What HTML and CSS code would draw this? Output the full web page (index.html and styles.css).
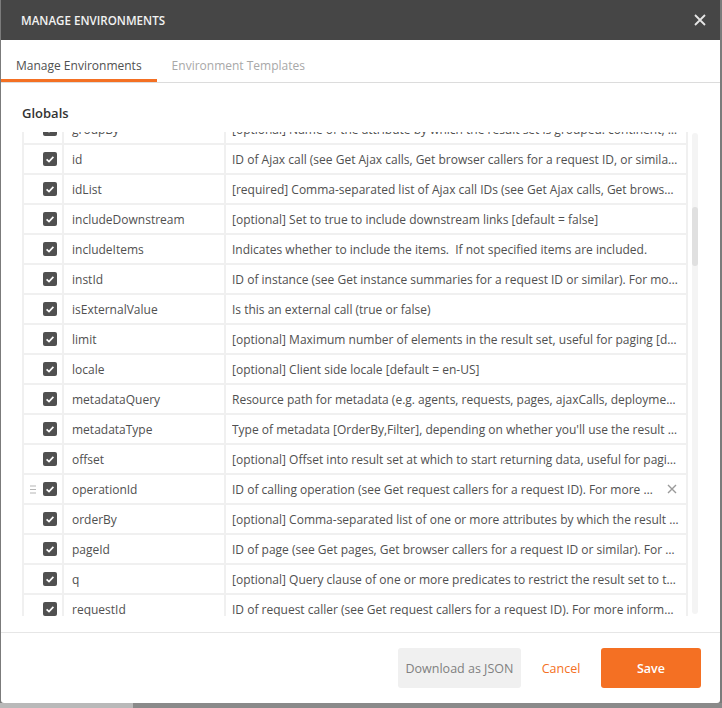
FILE: index.html
```html
<!DOCTYPE html>
<html lang="en">
<head>
	<meta charset="UTF-8">
	<title>Manage Environments</title>
	<link rel="stylesheet" href="styles.css">
</head>
<body>
	<div class="modal">
		<div class="modal-header">
			<span class="modal-title">MANAGE ENVIRONMENTS</span>
			<svg class="close" width="12" height="12" viewBox="0 0 12 12"><path d="M1 1L11 11M11 1L1 11" stroke="#e6e6e6" stroke-width="1.8" fill="none"/></svg>
		</div>
		<div class="tabs">
			<div class="tab active">Manage Environments</div>
			<div class="tab">Environment Templates</div>
		</div>
		<div class="content">
			<div class="section-title">Globals</div>
			<div class="list-wrap">
				<div class="viewport">
					<div class="rows">
						<div class="row"><div class="cell check"><svg width="14" height="14" viewBox="0 0 14 14"><rect width="14" height="14" rx="2" fill="#505050"/><path d="M3.6 7.3L6 9.6L10.4 4.9" stroke="#fff" stroke-width="1.7" fill="none"/></svg></div><div class="cell key">groupBy</div><div class="cell val"><span class="txt">[optional] Name of the attribute by which the result set is grouped: continent, country, region</span></div></div>
						<div class="row"><div class="cell check"><svg width="14" height="14" viewBox="0 0 14 14"><rect width="14" height="14" rx="2" fill="#505050"/><path d="M3.6 7.3L6 9.6L10.4 4.9" stroke="#fff" stroke-width="1.7" fill="none"/></svg></div><div class="cell key">id</div><div class="cell val"><span class="txt">ID of Ajax call (see Get Ajax calls, Get browser callers for a request ID, or similar calls)</span></div></div>
						<div class="row"><div class="cell check"><svg width="14" height="14" viewBox="0 0 14 14"><rect width="14" height="14" rx="2" fill="#505050"/><path d="M3.6 7.3L6 9.6L10.4 4.9" stroke="#fff" stroke-width="1.7" fill="none"/></svg></div><div class="cell key">idList</div><div class="cell val"><span class="txt">[required] Comma-separated list of Ajax call IDs (see Get Ajax calls, Get browser callers)</span></div></div>
						<div class="row"><div class="cell check"><svg width="14" height="14" viewBox="0 0 14 14"><rect width="14" height="14" rx="2" fill="#505050"/><path d="M3.6 7.3L6 9.6L10.4 4.9" stroke="#fff" stroke-width="1.7" fill="none"/></svg></div><div class="cell key">includeDownstream</div><div class="cell val"><span class="txt">[optional] Set to true to include downstream links [default = false]</span></div></div>
						<div class="row"><div class="cell check"><svg width="14" height="14" viewBox="0 0 14 14"><rect width="14" height="14" rx="2" fill="#505050"/><path d="M3.6 7.3L6 9.6L10.4 4.9" stroke="#fff" stroke-width="1.7" fill="none"/></svg></div><div class="cell key">includeItems</div><div class="cell val"><span class="txt">Indicates whether to include the items.&nbsp; If not specified items are included.</span></div></div>
						<div class="row"><div class="cell check"><svg width="14" height="14" viewBox="0 0 14 14"><rect width="14" height="14" rx="2" fill="#505050"/><path d="M3.6 7.3L6 9.6L10.4 4.9" stroke="#fff" stroke-width="1.7" fill="none"/></svg></div><div class="cell key">instId</div><div class="cell val"><span class="txt">ID of instance (see Get instance summaries for a request ID or similar). For more information</span></div></div>
						<div class="row"><div class="cell check"><svg width="14" height="14" viewBox="0 0 14 14"><rect width="14" height="14" rx="2" fill="#505050"/><path d="M3.6 7.3L6 9.6L10.4 4.9" stroke="#fff" stroke-width="1.7" fill="none"/></svg></div><div class="cell key">isExternalValue</div><div class="cell val"><span class="txt">Is this an external call (true or false)</span></div></div>
						<div class="row"><div class="cell check"><svg width="14" height="14" viewBox="0 0 14 14"><rect width="14" height="14" rx="2" fill="#505050"/><path d="M3.6 7.3L6 9.6L10.4 4.9" stroke="#fff" stroke-width="1.7" fill="none"/></svg></div><div class="cell key">limit</div><div class="cell val"><span class="txt">[optional] Maximum number of elements in the result set, useful for paging [default = 10]</span></div></div>
						<div class="row"><div class="cell check"><svg width="14" height="14" viewBox="0 0 14 14"><rect width="14" height="14" rx="2" fill="#505050"/><path d="M3.6 7.3L6 9.6L10.4 4.9" stroke="#fff" stroke-width="1.7" fill="none"/></svg></div><div class="cell key">locale</div><div class="cell val"><span class="txt">[optional] Client side locale [default = en-US]</span></div></div>
						<div class="row"><div class="cell check"><svg width="14" height="14" viewBox="0 0 14 14"><rect width="14" height="14" rx="2" fill="#505050"/><path d="M3.6 7.3L6 9.6L10.4 4.9" stroke="#fff" stroke-width="1.7" fill="none"/></svg></div><div class="cell key">metadataQuery</div><div class="cell val"><span class="txt">Resource path for metadata (e.g. agents, requests, pages, ajaxCalls, deployments, instances)</span></div></div>
						<div class="row"><div class="cell check"><svg width="14" height="14" viewBox="0 0 14 14"><rect width="14" height="14" rx="2" fill="#505050"/><path d="M3.6 7.3L6 9.6L10.4 4.9" stroke="#fff" stroke-width="1.7" fill="none"/></svg></div><div class="cell key">metadataType</div><div class="cell val"><span class="txt">Type of metadata [OrderBy,Filter], depending on whether you'll use the result set</span></div></div>
						<div class="row"><div class="cell check"><svg width="14" height="14" viewBox="0 0 14 14"><rect width="14" height="14" rx="2" fill="#505050"/><path d="M3.6 7.3L6 9.6L10.4 4.9" stroke="#fff" stroke-width="1.7" fill="none"/></svg></div><div class="cell key">offset</div><div class="cell val"><span class="txt">[optional] Offset into result set at which to start returning data, useful for paging</span></div></div>
						<div class="row hover"><div class="cell check"><svg class="handle" width="6" height="9" viewBox="0 0 6 9"><path d="M0 1H6M0 4.5H6M0 8H6" stroke="#b5b5b5" stroke-width="1.2"/></svg><svg width="14" height="14" viewBox="0 0 14 14"><rect width="14" height="14" rx="2" fill="#505050"/><path d="M3.6 7.3L6 9.6L10.4 4.9" stroke="#fff" stroke-width="1.7" fill="none"/></svg></div><div class="cell key">operationId</div><div class="cell val"><span class="txt">ID of calling operation (see Get request callers for a request ID). For more information</span><svg class="remove" width="10" height="10" viewBox="0 0 10 10"><path d="M1 1L9 9M9 1L1 9" stroke="#9a9a9a" stroke-width="1.4" fill="none"/></svg></div></div>
						<div class="row"><div class="cell check"><svg width="14" height="14" viewBox="0 0 14 14"><rect width="14" height="14" rx="2" fill="#505050"/><path d="M3.6 7.3L6 9.6L10.4 4.9" stroke="#fff" stroke-width="1.7" fill="none"/></svg></div><div class="cell key">orderBy</div><div class="cell val"><span class="txt">[optional] Comma-separated list of one or more attributes by which the result set is ordered</span></div></div>
						<div class="row"><div class="cell check"><svg width="14" height="14" viewBox="0 0 14 14"><rect width="14" height="14" rx="2" fill="#505050"/><path d="M3.6 7.3L6 9.6L10.4 4.9" stroke="#fff" stroke-width="1.7" fill="none"/></svg></div><div class="cell key">pageId</div><div class="cell val"><span class="txt">ID of page (see Get pages, Get browser callers for a request ID or similar). For more information</span></div></div>
						<div class="row"><div class="cell check"><svg width="14" height="14" viewBox="0 0 14 14"><rect width="14" height="14" rx="2" fill="#505050"/><path d="M3.6 7.3L6 9.6L10.4 4.9" stroke="#fff" stroke-width="1.7" fill="none"/></svg></div><div class="cell key">q</div><div class="cell val"><span class="txt">[optional] Query clause of one or more predicates to restrict the result set to those</span></div></div>
						<div class="row"><div class="cell check"><svg width="14" height="14" viewBox="0 0 14 14"><rect width="14" height="14" rx="2" fill="#505050"/><path d="M3.6 7.3L6 9.6L10.4 4.9" stroke="#fff" stroke-width="1.7" fill="none"/></svg></div><div class="cell key">requestId</div><div class="cell val"><span class="txt">ID of request caller (see Get request callers for a request ID). For more information</span></div></div>
						<div class="row"><div class="cell check"><svg width="14" height="14" viewBox="0 0 14 14"><rect width="14" height="14" rx="2" fill="#505050"/><path d="M3.6 7.3L6 9.6L10.4 4.9" stroke="#fff" stroke-width="1.7" fill="none"/></svg></div><div class="cell key">segmentBy</div><div class="cell val"><span class="txt">[optional] Name of the attribute by which the result set is segmented</span></div></div>
					</div>
				</div>
				<div class="scrollbar"><div class="thumb"></div></div>
			</div>
		</div>
		<div class="modal-footer">
			<button class="btn btn-secondary">Download as JSON</button>
			<button class="btn btn-link">Cancel</button>
			<button class="btn btn-primary">Save</button>
		</div>
	</div>
</body>
</html>
```

FILE: styles.css
```css
*{margin:0;padding:0;box-sizing:border-box;}
body{
	background:linear-gradient(to right,#b9b9b9 133px,#8a8a8a 133px);
	font-family:"Open Sans","Liberation Sans",sans-serif;
	overflow:hidden;
	width:722px;
	height:708px;
	position:relative;
}
body::before{
	content:"";
	position:absolute;
	left:0;
	top:0;
	width:722px;
	height:703px;
	background:#7b7b7b;
}
.modal{
	position:relative;
	margin-left:1px;
	width:719px;
	height:703px;
	background:#fff;
	display:flex;
	flex-direction:column;
	border-radius:0 0 3px 3px;
	overflow:hidden;
}
.modal-header{
	height:40px;
	background:#464646;
	display:flex;
	align-items:center;
	justify-content:space-between;
	padding:0 14px 0 20px;
	flex-shrink:0;
}
.modal-title{
	color:#f2f2f2;
	font-size:11.6px;
	font-weight:600;
}
.tabs{
	height:43px;
	display:flex;
	border-bottom:1px solid #dcdcdc;
	flex-shrink:0;
}
.tab{
	padding:12px 15px 0;
	font-size:12px;
	color:#a8a8a8;
	display:flex;
	align-items:center;
	border-bottom:3px solid transparent;
}
.tab.active{
	color:#505050;
	border-bottom-color:#f47023;
}
.content{
	flex:1;
	padding:20px 22px 16px 21px;
	display:flex;
	flex-direction:column;
	min-height:0;
}
.section-title{
	font-size:13px;
	font-weight:600;
	color:#333;
	line-height:20px;
	margin-bottom:9px;
}
.list-wrap{
	flex:1;
	display:flex;
	gap:4px;
	min-height:0;
}
.viewport{
	flex:1;
	overflow:hidden;
}
.rows{
	margin-top:-17px;
}
.row{
	display:grid;
	grid-template-columns:38px 160px 1fr;
	gap:2px;
	background:#f0f0f0;
	border-left:2px solid #f0f0f0;
	border-right:2px solid #f0f0f0;
	border-bottom:2px solid #f0f0f0;
}
.cell{
	background:#fff;
	height:28px;
	display:flex;
	align-items:center;
	font-size:12px;
	color:#505050;
	min-width:0;
}
.check{
	justify-content:flex-end;
	padding-right:5px;
	gap:7px;
}
.check svg{
	display:block;
}
.key{
	padding-left:8px;
}
.val{
	padding:0 6px 0 6px;
}
.txt{
	flex:1;
	white-space:nowrap;
	overflow:hidden;
	text-overflow:ellipsis;
	min-width:0;
}
.remove{
	margin-left:14px;
	margin-right:3px;
	flex-shrink:0;
}
.scrollbar{
	width:6px;
	margin-top:1px;
	margin-bottom:2px;
	background:#f4f4f4;
	border-radius:3px;
	padding-top:74px;
}
.thumb{
	height:59px;
	background:#e0e0e0;
	border-radius:3px;
}
.modal-footer{
	height:71px;
	border-top:1px solid #e6e6e6;
	display:flex;
	justify-content:flex-end;
	align-items:center;
	padding:0 19px 0 0;
	gap:2px;
	flex-shrink:0;
}
.btn{
	height:40px;
	border:none;
	border-radius:3px;
	font-family:"Open Sans","Liberation Sans",sans-serif;
	font-size:12.5px;
	cursor:pointer;
}
.btn-secondary{
	width:123px;
	background:#f0f0f0;
	color:#808080;
}
.btn-link{
	width:76px;
	background:transparent;
	color:#f47023;
}
.btn-primary{
	width:100px;
	background:#f47023;
	color:#fff;
	font-weight:600;
}
```
